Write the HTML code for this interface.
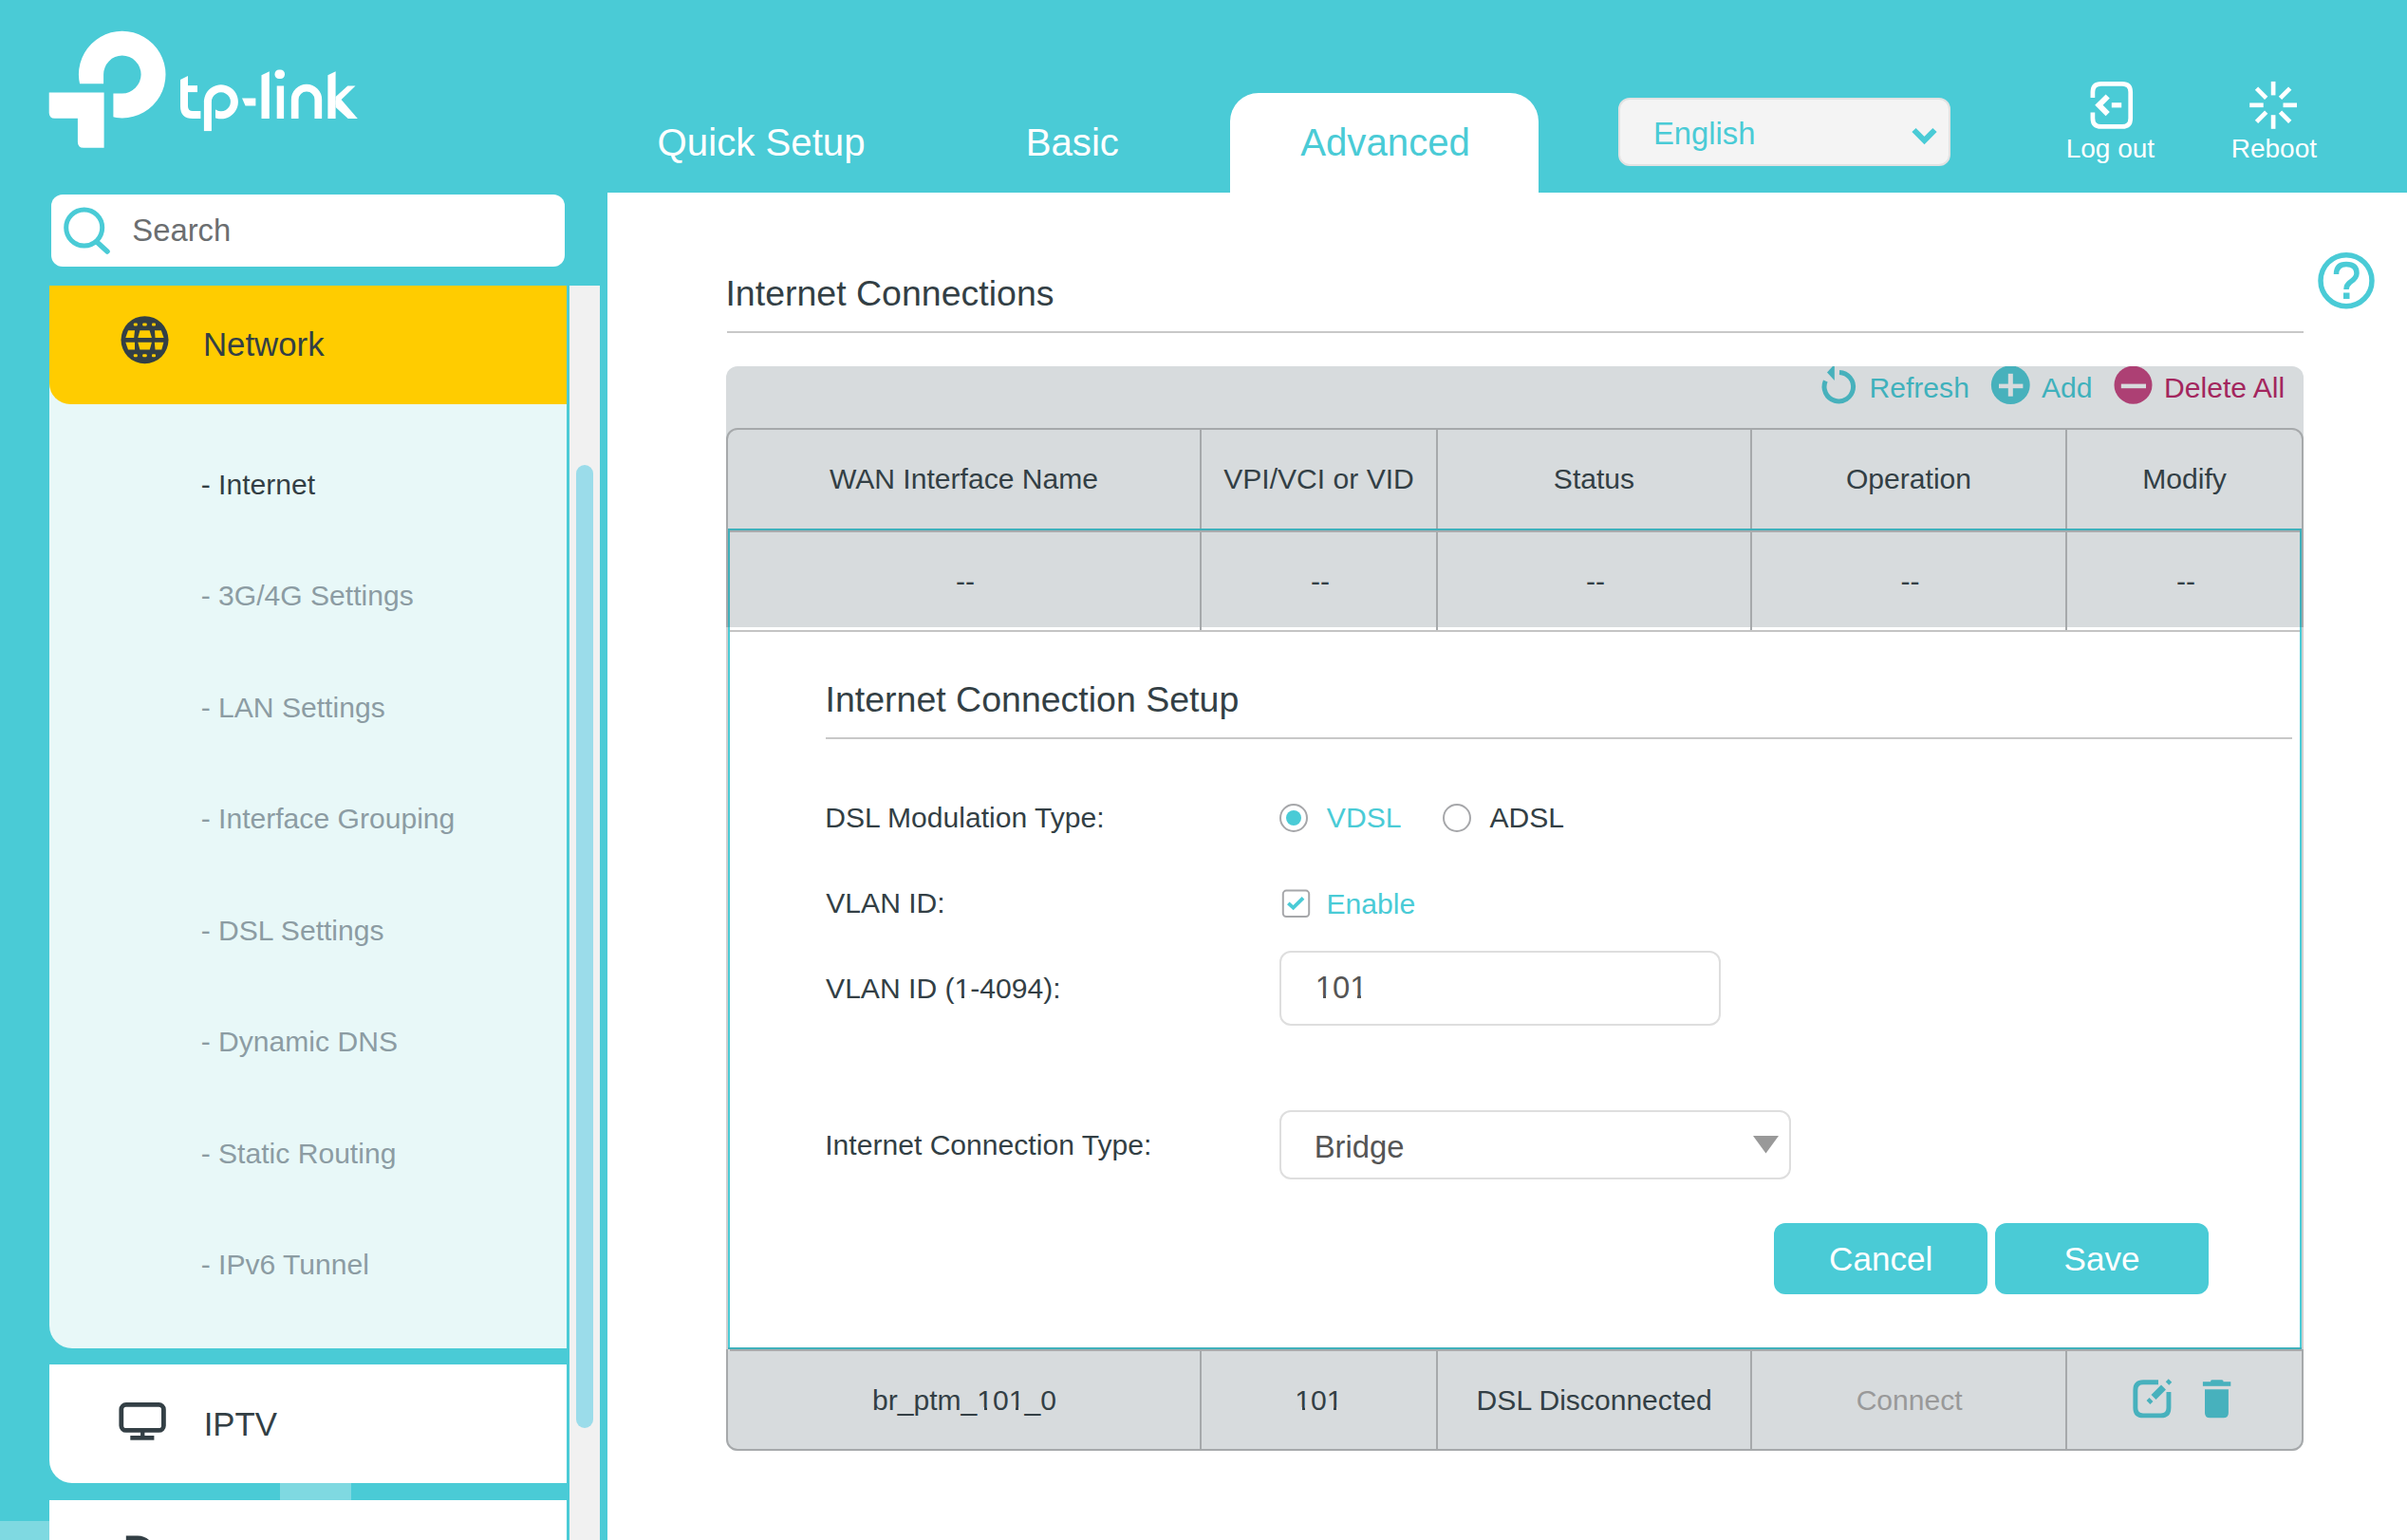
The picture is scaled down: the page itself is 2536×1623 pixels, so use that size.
<!DOCTYPE html>
<html><head><meta charset="utf-8">
<style>
html,body{margin:0;padding:0;}
body{width:2536px;height:1623px;position:relative;overflow:hidden;background:#4acbd6;font-family:"Liberation Sans",sans-serif;color:#333f45;}
.a{position:absolute;}
.t{position:absolute;white-space:nowrap;line-height:0;}
.c{position:absolute;white-space:nowrap;line-height:0;text-align:center;}
svg{position:absolute;overflow:visible;}
</style></head>
<body>
<!-- main white area -->
<div class="a" style="left:640px;top:203px;width:1896px;height:1420px;background:#fff;"></div>

<!-- ===== HEADER ===== -->
<div class="a" style="left:1296px;top:98px;width:325px;height:105px;background:#fff;border-radius:30px 30px 0 0;"></div>

<div class="a" style="left:1705px;top:103px;width:346px;height:68px;background:#f4f4f4;border:2px solid #e2e2e2;border-radius:12px;"></div>

<!-- ===== SIDEBAR ===== -->
<div class="a" style="left:54px;top:205px;width:541px;height:76px;background:#fff;border-radius:12px;"></div>

<div class="a" style="left:52px;top:380px;width:545px;height:1041px;background:#e8f8f8;border-bottom-left-radius:24px;"></div>
<div class="a" style="left:52px;top:301px;width:545px;height:125px;background:#ffcc00;border-bottom-left-radius:22px;"></div>

<div class="a" style="left:600px;top:301px;width:32px;height:1322px;background:#f1f1f1;"></div>
<div class="a" style="left:607px;top:490px;width:18px;height:1015px;background:#9bdcea;border-radius:9px;"></div>

<div class="a" style="left:52px;top:1438px;width:545px;height:124.5px;background:#fff;border-bottom-left-radius:24px;"></div>
<div class="a" style="left:52px;top:1581px;width:545px;height:42px;background:#fff;"></div>
<div class="a" style="left:295px;top:1562.5px;width:74.5px;height:18.5px;background:#7fd9e1;"></div>
<div class="a" style="left:0px;top:1603px;width:52px;height:20px;background:#7fd9e1;"></div>


<!-- ===== MAIN ===== -->
<div class="a" style="left:766px;top:349px;width:1661px;height:2px;background:#c8c8c8;"></div>

<!-- gray box -->
<div class="a" style="left:765px;top:386px;width:1662px;height:1143px;background:#d7dbdd;border-radius:12px;"></div>
<div class="a" style="left:765px;top:451px;width:1658px;height:1074px;border:2px solid #a6a9ab;border-radius:12px;"></div>


<!-- header separators -->
<div class="a" style="left:1264px;top:453px;width:2px;height:104px;background:#a6a9ab;"></div>
<div class="a" style="left:1513px;top:453px;width:2px;height:104px;background:#a6a9ab;"></div>
<div class="a" style="left:1844px;top:453px;width:2px;height:104px;background:#a6a9ab;"></div>
<div class="a" style="left:2176px;top:453px;width:2px;height:104px;background:#a6a9ab;"></div>

<!-- teal edit box -->
<div class="a" style="left:767px;top:557px;width:1654px;height:861px;border:2px solid #3fb0bb;"></div>
<div class="a" style="left:769px;top:661px;width:1654px;height:759px;background:#fff;"></div>
<div class="a" style="left:767px;top:661px;width:2px;height:759px;background:#4acbd6;"></div>
<div class="a" style="left:2423px;top:661px;width:2px;height:759px;background:#4acbd6;"></div>
<div class="a" style="left:765px;top:661px;width:2px;height:761px;background:#cfcfcf;"></div>
<div class="a" style="left:2425px;top:661px;width:2px;height:761px;background:#cfcfcf;"></div>
<div class="a" style="left:769px;top:559px;width:1654px;height:2px;background:#a8abad;"></div>
<div class="a" style="left:1264px;top:561px;width:2px;height:103px;background:#a6a9ab;"></div>
<div class="a" style="left:1513px;top:561px;width:2px;height:103px;background:#a6a9ab;"></div>
<div class="a" style="left:1844px;top:561px;width:2px;height:103px;background:#a6a9ab;"></div>
<div class="a" style="left:2176px;top:561px;width:2px;height:103px;background:#a6a9ab;"></div>
<div class="a" style="left:769px;top:664px;width:1654px;height:2px;background:#c4c4c4;"></div>

<div class="a" style="left:870px;top:777px;width:1545px;height:2px;background:#c8c8c8;"></div>

<div class="a" style="left:1348px;top:1002px;width:461px;height:75px;border:2px solid #dedede;border-radius:12px;"></div>
<div class="a" style="left:1348px;top:1169.5px;width:535px;height:69.5px;border:2px solid #dedede;border-radius:12px;"></div>

<div class="a" style="left:1869.4px;top:1289.3px;width:224.6px;height:74.4px;background:#4acbd6;border-radius:12px;"></div>
<div class="a" style="left:2102px;top:1289.3px;width:225px;height:74.4px;background:#4acbd6;border-radius:12px;"></div>

<!-- bottom row -->
<div class="a" style="left:769px;top:1422px;width:1656px;height:2px;background:#a8abad;"></div>
<div class="a" style="left:1264px;top:1424px;width:2px;height:103px;background:#a6a9ab;"></div>
<div class="a" style="left:1513px;top:1424px;width:2px;height:103px;background:#a6a9ab;"></div>
<div class="a" style="left:1844px;top:1424px;width:2px;height:103px;background:#a6a9ab;"></div>
<div class="a" style="left:2176px;top:1424px;width:2px;height:103px;background:#a6a9ab;"></div>


<div class="t" style="left:692.60px;top:151px;font-size:40.2px;color:#fff;">Quick Setup</div>
<div class="t" style="left:1080.70px;top:151px;font-size:40.2px;color:#fff;">Basic</div>
<div class="t" style="left:1370.22px;top:151px;font-size:40.2px;color:#4acbd6;">Advanced</div>
<div class="t" style="left:1741.91px;top:141px;font-size:32.8px;color:#4acbd6;">English</div>
<div class="t" style="left:2176.70px;top:157px;font-size:28px;color:#fff;">Log out</div>
<div class="t" style="left:2350.70px;top:157px;font-size:28px;color:#fff;">Reboot</div>
<div class="t" style="left:139.31px;top:243px;font-size:32.8px;color:#6b6e70;">Search</div>
<div class="t" style="left:213.95px;top:363px;font-size:34.8px;color:#333f45;">Network</div>
<div class="t" style="left:214.69px;top:1501px;font-size:34.8px;color:#333f45;">IPTV</div>
<div class="t" style="left:211.66px;top:511px;font-size:30.1px;color:#333f45;">- Internet</div>
<div class="t" style="left:211.66px;top:628px;font-size:30.1px;color:#8c9ca3;">- 3G/4G Settings</div>
<div class="t" style="left:211.66px;top:746px;font-size:30.1px;color:#8c9ca3;">- LAN Settings</div>
<div class="t" style="left:211.66px;top:863px;font-size:30.1px;color:#8c9ca3;">- Interface Grouping</div>
<div class="t" style="left:211.66px;top:981px;font-size:30.1px;color:#8c9ca3;">- DSL Settings</div>
<div class="t" style="left:211.66px;top:1098px;font-size:30.1px;color:#8c9ca3;">- Dynamic DNS</div>
<div class="t" style="left:211.66px;top:1216px;font-size:30.1px;color:#8c9ca3;">- Static Routing</div>
<div class="t" style="left:211.66px;top:1333px;font-size:30.1px;color:#8c9ca3;">- IPv6 Tunnel</div>
<div class="t" style="left:764.44px;top:309px;font-size:37.5px;color:#333f45;">Internet Connections</div>
<div class="t" style="left:1969.53px;top:409px;font-size:30.1px;color:#3fb1bc;">Refresh</div>
<div class="t" style="left:2150.94px;top:409px;font-size:30.1px;color:#3fb1bc;">Add</div>
<div class="t" style="left:2280.03px;top:409px;font-size:30.1px;color:#a3265e;">Delete All</div>
<div class="c" style="left:715.50px;width:600px;top:505px;font-size:30.1px;color:#333f45;">WAN Interface Name</div>
<div class="c" style="left:1089.50px;width:600px;top:505px;font-size:30.1px;color:#333f45;">VPI/VCI or VID</div>
<div class="c" style="left:1379.50px;width:600px;top:505px;font-size:30.1px;color:#333f45;">Status</div>
<div class="c" style="left:1711.00px;width:600px;top:505px;font-size:30.1px;color:#333f45;">Operation</div>
<div class="c" style="left:2001.50px;width:600px;top:505px;font-size:30.1px;color:#333f45;">Modify</div>
<div class="c" style="left:717.00px;width:600px;top:613px;font-size:30.1px;color:#333f45;">--</div>
<div class="c" style="left:1091.00px;width:600px;top:613px;font-size:30.1px;color:#333f45;">--</div>
<div class="c" style="left:1381.00px;width:600px;top:613px;font-size:30.1px;color:#333f45;">--</div>
<div class="c" style="left:1712.50px;width:600px;top:613px;font-size:30.1px;color:#333f45;">--</div>
<div class="c" style="left:2003.00px;width:600px;top:613px;font-size:30.1px;color:#333f45;">--</div>
<div class="t" style="left:869.54px;top:737px;font-size:37.5px;color:#333f45;">Internet Connection Setup</div>
<div class="t" style="left:869.23px;top:862px;font-size:30.1px;color:#333f45;">DSL Modulation Type:</div>
<div class="t" style="left:870.27px;top:952px;font-size:30.1px;color:#333f45;">VLAN ID:</div>
<div class="t" style="left:870.07px;top:1042px;font-size:30.1px;color:#333f45;">VLAN ID (1-4094):</div>
<div class="t" style="left:869.22px;top:1207px;font-size:30.1px;color:#333f45;">Internet Connection Type:</div>
<div class="t" style="left:1397.87px;top:862px;font-size:30.1px;color:#4acbd6;">VDSL</div>
<div class="t" style="left:1569.44px;top:862px;font-size:30.1px;color:#333f45;">ADSL</div>
<div class="t" style="left:1397.43px;top:953px;font-size:30.1px;color:#4acbd6;">Enable</div>
<div class="t" style="left:1385.80px;top:1041px;font-size:32.8px;color:#555;">101</div>
<div class="t" style="left:1384.71px;top:1209px;font-size:32.8px;color:#555;">Bridge</div>
<div class="c" style="left:1681.70px;width:600px;top:1327px;font-size:35.1px;color:#fff;">Cancel</div>
<div class="c" style="left:1914.50px;width:600px;top:1327px;font-size:35.1px;color:#fff;">Save</div>
<div class="c" style="left:716.00px;width:600px;top:1476px;font-size:30.1px;color:#333f45;">br_ptm_101_0</div>
<div class="c" style="left:1089.40px;width:600px;top:1476px;font-size:30.1px;color:#333f45;">101</div>
<div class="c" style="left:1379.70px;width:600px;top:1476px;font-size:30.1px;color:#333f45;">DSL Disconnected</div>
<div class="c" style="left:1711.70px;width:600px;top:1476px;font-size:30.1px;color:#999;">Connect</div>
<div class="a" style="left:1007.00px;top:1049.25px;width:5.82px;height:3.25px;background:#fff;"></div>
<div class="a" style="left:1015.98px;top:1049.25px;width:5.47px;height:3.25px;background:#fff;"></div>
<div class="a" style="left:1387.44px;top:1049.05px;width:6.36px;height:3.45px;background:#fff;"></div>
<div class="a" style="left:1397.20px;top:1049.05px;width:5.98px;height:3.45px;background:#fff;"></div>
<div class="a" style="left:1423.91px;top:1049.05px;width:6.36px;height:3.45px;background:#fff;"></div>
<div class="a" style="left:1433.67px;top:1049.05px;width:5.98px;height:3.45px;background:#fff;"></div>
<div class="a" style="left:1030.85px;top:1483.25px;width:5.82px;height:3.25px;background:#d7dbdd;"></div>
<div class="a" style="left:1039.83px;top:1483.25px;width:5.47px;height:3.25px;background:#d7dbdd;"></div>
<div class="a" style="left:1064.32px;top:1483.25px;width:5.82px;height:3.25px;background:#d7dbdd;"></div>
<div class="a" style="left:1073.30px;top:1483.25px;width:5.47px;height:3.25px;background:#d7dbdd;"></div>
<div class="a" style="left:1365.79px;top:1483.25px;width:5.82px;height:3.25px;background:#d7dbdd;"></div>
<div class="a" style="left:1374.76px;top:1483.25px;width:5.47px;height:3.25px;background:#d7dbdd;"></div>
<div class="a" style="left:1399.26px;top:1483.25px;width:5.82px;height:3.25px;background:#d7dbdd;"></div>
<div class="a" style="left:1408.23px;top:1483.25px;width:5.47px;height:3.25px;background:#d7dbdd;"></div>
<!-- ===== ICONS ===== -->
<svg style="left:0;top:0" width="400" height="170" viewBox="0 0 400 170">
 <defs><clipPath id="pc"><polygon points="0,0 400,0 400,170 227,170 227,107.3 0,107.3"/></clipPath><clipPath id="lc"><polygon points="0,0 400,0 400,170 119.4,170 119.4,88.2 0,88.2"/></clipPath></defs>
 <path clip-path="url(#lc)" fill="#fff" fill-rule="evenodd" d="M128.7,32.8 a45.8,45.8 0 1 0 0.01,0 Z M128.7,58.6 A19.9,19.9 0 0 1 128.7,98.4 H109.1 V78.5 A19.6,19.9 0 0 1 128.7,58.6 Z"/>
 <path fill="#fff" d="M51.7,97.4 H109.6 V155.8 H88 Q81.9,155.8 81.9,149.8 V124.7 H57.7 Q51.7,124.7 51.7,118.7 Z"/>
 <g fill="none" stroke="#fff" stroke-width="8">
  <path d="M194,86 V112 Q194,121 203,121 H211.4"/>
  <path d="M218.9,106 V138.1"/>
  <path d="M310.7,125 V105 A12.3,12.3 0 0 1 335.3,105 V125" stroke-width="7.7"/>
 </g>
 <g fill="#fff">
  <rect x="198" y="90.1" width="10" height="7"/>
  <polygon points="190,84 198,80 198,87 190,87"/>
  <path clip-path="url(#pc)" fill-rule="evenodd" d="M232.9,89.3 a18,18 0 1 0 0.01,0 Z M232.9,97.3 a10,10 0 1 0 0.01,0 Z"/>
  <polygon points="255,103.6 269.4,103.6 269.4,111.5 258.5,111.5"/>
  <polygon points="275.5,79.2 283.8,75.3 283.8,125 275.5,125"/>
  <rect x="289.5" y="73.5" width="10.5" height="9.6" rx="4.5"/>
  <rect x="291.7" y="90.5" width="7.4" height="34.5"/>
  <polygon points="345.4,79.2 353.6,75.3 353.6,125 345.4,125"/>
  <polygon points="353.6,102 366.3,90.5 374.5,90.5 356.5,108 353.6,110.5"/>
  <polygon points="353.6,113 353.6,106 358.5,103.8 376.8,125 366.7,125"/>
 </g>
</svg>
<!-- search icon -->
<svg style="left:0;top:0" width="200" height="300" viewBox="0 0 200 300">
 <circle cx="88.7" cy="240" r="19" fill="none" stroke="#4acbd6" stroke-width="5"/>
 <line x1="102" y1="255" x2="113" y2="265" stroke="#4acbd6" stroke-width="5.5" stroke-linecap="round"/>
</svg>
<!-- globe -->
<svg style="left:0;top:0" width="200" height="400" viewBox="0 0 200 400">
 <circle cx="152.5" cy="358.2" r="25" fill="#333f45"/>
 <g fill="#ffcc00">
  <polygon points="135,348.3 142,348.3 141.2,355.9 132.3,355.9"/>
  <polygon points="147.4,348.3 157.6,348.3 159.9,355.9 145.3,355.9"/>
  <polygon points="163,348.3 169.8,348.3 172.6,355.9 163.5,355.9"/>
  <polygon points="132.3,360.8 142,360.8 142,368.6 135,368.6"/>
  <polygon points="145.3,360.8 159.9,360.8 157.8,368.6 147.4,368.6"/>
  <polygon points="162.8,360.8 172.4,360.8 170.3,368.6 163.5,368.6"/>
  <rect x="140.8" y="340.6" width="4" height="3" rx="1"/>
  <rect x="150.2" y="340.6" width="4.5" height="3" rx="1"/>
  <rect x="160" y="340.6" width="4" height="3" rx="1"/>
  <rect x="140.8" y="373.3" width="4" height="3" rx="1"/>
  <rect x="150.2" y="373.3" width="4.5" height="3" rx="1"/>
  <rect x="160" y="373.3" width="4" height="3" rx="1"/>
 </g>
</svg>
<!-- monitor -->
<svg style="left:0;top:0" width="200" height="1623" viewBox="0 0 200 1623">
 <rect x="127.8" y="1480.4" width="44.6" height="27" rx="5" fill="none" stroke="#333f45" stroke-width="4.8"/>
 <rect x="148.1" y="1509" width="4.3" height="5" fill="#333f45"/>
 <rect x="137.3" y="1513" width="25.1" height="4.7" fill="#333f45"/>
 <path d="M132.8,1623 V1618.4 H145 Q152,1618.4 157,1623 Z" fill="#333f45"/>
</svg>
<!-- logout -->
<svg style="left:0;top:0" width="2536" height="203" viewBox="0 0 2536 203">
 <path d="M2204.9,103 V97 Q2204.9,88.3 2213.6,88.3 H2236 Q2244.7,88.3 2244.7,97 V124.7 Q2244.7,133.4 2236,133.4 H2213.6 Q2204.9,133.4 2204.9,124.7 V118.6" fill="none" stroke="#fff" stroke-width="4.7"/>
 <polygon points="2207.2,110.8 2218.6,99.4 2222.8,103.6 2215.6,110.8 2222.8,118 2218.6,122.2" fill="#fff"/>
 <rect x="2224.8" y="108.2" width="10.4" height="5.2" fill="#fff"/>
 <g stroke="#fff" stroke-width="4.7">
  <line x1="2395.1" y1="85.9" x2="2395.1" y2="100.4"/>
  <line x1="2395.1" y1="121.2" x2="2395.1" y2="135.8"/>
  <line x1="2370.2" y1="110.8" x2="2384.7" y2="110.8"/>
  <line x1="2405.5" y1="110.8" x2="2420" y2="110.8"/>
  <line x1="2377.5" y1="93.2" x2="2387.7" y2="103.4"/>
  <line x1="2402.5" y1="118.2" x2="2412.7" y2="128.4"/>
  <line x1="2412.7" y1="93.2" x2="2402.5" y2="103.4"/>
  <line x1="2387.7" y1="118.2" x2="2377.5" y2="128.4"/>
 </g>
 <polyline points="2016.5,137 2027.5,148 2038.5,137" fill="none" stroke="#4acbd6" stroke-width="6"/>
</svg>
<!-- help -->
<svg style="left:0;top:0" width="2536" height="400" viewBox="0 0 2536 400">
 <circle cx="2472" cy="295.7" r="27" fill="none" stroke="#4acbd6" stroke-width="5.5"/>
 <path d="M2461.5,289 Q2461.5,278.5 2472,278.5 Q2483,278.5 2483,288 Q2483,293 2476,297.5 Q2472,300.5 2472,305" fill="none" stroke="#4acbd6" stroke-width="5.5"/>
 <rect x="2469" y="308.5" width="6.5" height="6.5" fill="#4acbd6"/>
</svg>
<!-- toolbar icons (clipped at gray box top) -->
<svg style="left:0;top:0" width="2536" height="500" viewBox="0 0 2536 500">
 <defs><clipPath id="tb"><rect x="700" y="386" width="1800" height="100"/></clipPath></defs>
 <g clip-path="url(#tb)">
  <path d="M1923.3,401.6 A15.25,15.25 0 1 0 1938,392.4" fill="none" stroke="#47b1bc" stroke-width="5"/>
  <polygon points="1925,392.4 1932.8,384 1932.8,401" fill="#47b1bc"/>
  <circle cx="2118.3" cy="405.7" r="20.4" fill="#47b1bc"/>
  <rect x="2106" y="404.6" width="25.4" height="4.6" fill="#d7dbdd"/>
  <rect x="2115.8" y="393.8" width="5" height="23.9" fill="#d7dbdd"/>
  <circle cx="2247.5" cy="405.7" r="20" fill="#ad4074"/>
  <rect x="2234.8" y="404.6" width="26.2" height="4.6" fill="#d7dbdd"/>
 </g>
</svg>
<!-- radios, checkbox -->
<svg style="left:0;top:0" width="2536" height="1623" viewBox="0 0 2536 1623">
 <circle cx="1363" cy="862" r="14" fill="#fff" stroke="#a6a7aa" stroke-width="2"/>
 <circle cx="1363" cy="862" r="8" fill="#4acbd6"/>
 <circle cx="1535" cy="862" r="14" fill="#fff" stroke="#a6a7aa" stroke-width="2"/>
 <rect x="1351.8" y="938.6" width="27.4" height="27.4" rx="3.5" fill="#fff" stroke="#a6a7aa" stroke-width="2"/>
 <polyline points="1357.3,951.8 1362.6,956.6 1373,946.3" fill="none" stroke="#4acbd6" stroke-width="3.8"/>
 <polygon points="1847,1197 1874,1197 1860.5,1215.4" fill="#999"/>
 <!-- edit & trash -->
 <path d="M2274,1456.75 H2258 Q2249.85,1456.75 2249.85,1464.9 V1483.7 Q2249.85,1491.85 2258,1491.85 H2276.8 Q2284.95,1491.85 2284.95,1483.7 V1467" fill="none" stroke="#47b1bd" stroke-width="4.9"/>
 <line x1="2269" y1="1472.5" x2="2279.5" y2="1462" stroke="#47b1bd" stroke-width="7"/>
 <line x1="2263.5" y1="1478" x2="2266.5" y2="1475" stroke="#47b1bd" stroke-width="5.5"/>
 <line x1="2283.5" y1="1458" x2="2286.5" y2="1455" stroke="#47b1bd" stroke-width="5"/>
 <rect x="2320.9" y="1456.2" width="29.4" height="4.6" fill="#47b1bd"/>
 <rect x="2329" y="1454.3" width="13.5" height="3" rx="1.5" fill="#47b1bd"/>
 <path d="M2323,1464.3 H2347.9 V1489 Q2347.9,1494.3 2342.6,1494.3 H2328.3 Q2323,1494.3 2323,1489 Z" fill="#47b1bd"/>
</svg>

</body></html>
